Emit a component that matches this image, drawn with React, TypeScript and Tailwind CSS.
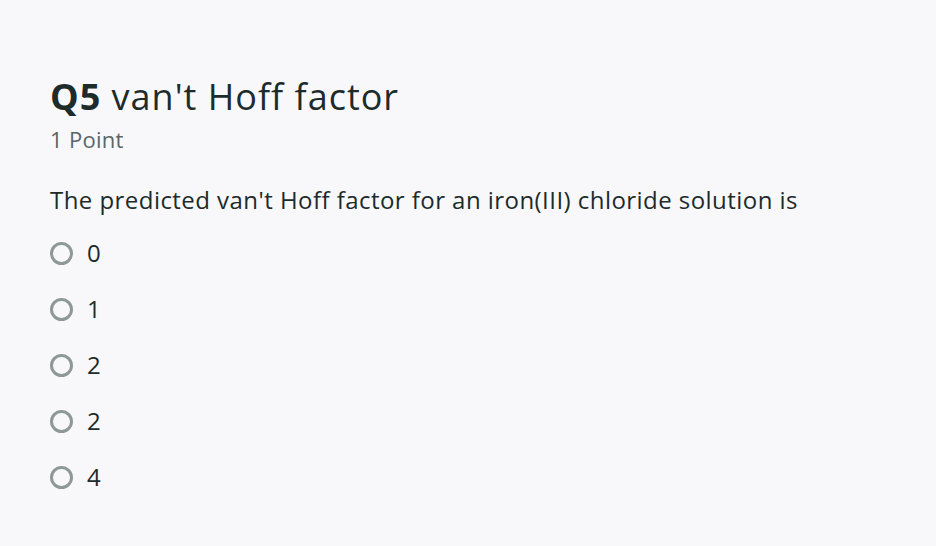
const options = ["0", "1", "2", "2", "4"];

export default function App() {
  return (
    <div
      className="h-[546px] w-[936px] bg-[#f8f8fb] pl-[50px] pt-[76px] text-[#1d2b2b]"
      style={{ fontFamily: '"Open Sans", "Liberation Sans", sans-serif' }}
    >
      <h1 className="text-[36px] leading-[42px] tracking-[1px]">
        <span className="font-bold">Q5</span> van't Hoff factor
      </h1>
      <p className="mt-[8px] text-[22px] leading-[26px] tracking-[0.3px] text-[#5a6666]">1 Point</p>
      <p className="mt-[33px] text-[24px] leading-[30px] tracking-[0.45px]">
        The predicted van't Hoff factor for an iron(III) chloride solution is
      </p>
      <div className="mt-[10px] flex flex-col">
        {options.map((o, i) => (
          <label key={i} className="flex h-[56px] items-center gap-[14px]">
            <span className="box-border h-[23px] w-[23px] rounded-full border-[3px] border-[#8e9897]" />
            <span className="text-[24px] leading-none">{o}</span>
          </label>
        ))}
      </div>
    </div>
  );
}
